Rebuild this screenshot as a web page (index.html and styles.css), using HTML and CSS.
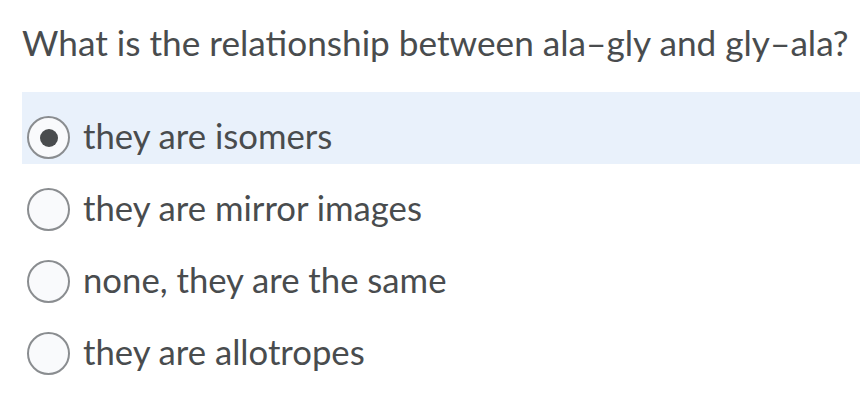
FILE: index.html
```html
<!DOCTYPE html>
<html lang="en">
<head>
  <meta charset="UTF-8">
  <title>Quiz question</title>
  <link rel="stylesheet" href="styles.css">
</head>
<body>
  <div class="question">
    <h2 class="question-text">What is the relationship between ala&#8211;gly and gly&#8211;ala?</h2>
    <div class="answers">
      <label class="answer selected">
        <span class="radio checked"></span>
        <span class="answer-text">they are isomers</span>
      </label>
      <label class="answer">
        <span class="radio"></span>
        <span class="answer-text">they are mirror images</span>
      </label>
      <label class="answer">
        <span class="radio"></span>
        <span class="answer-text">none, they are the same</span>
      </label>
      <label class="answer">
        <span class="radio"></span>
        <span class="answer-text">they are allotropes</span>
      </label>
    </div>
  </div>
</body>
</html>
```

FILE: styles.css
```css
* {
  box-sizing: border-box;
}
body {
  margin: 0;
  background: #ffffff;
  color: #494c4e;
  font-family: Lato, "Open Sans", sans-serif;
}
.question {
  padding: 20px 0 0 22px;
}
.question-text {
  font-size: 35.2px;
  font-weight: normal;
  line-height: 44px;
  margin: 0 0 28px;
}
.answers {
  display: flex;
  flex-direction: column;
}
.answer {
  display: flex;
  align-items: center;
  gap: 13px;
  height: 72px;
  padding: 24px 0 5px 5px;
}
.answer.selected {
  background: #e9f1fb;
}
.radio {
  width: 43px;
  height: 43px;
  border: 2px solid #8a8d90;
  border-radius: 50%;
  background: #f9fafc;
  display: flex;
  align-items: center;
  justify-content: center;
  flex-shrink: 0;
}
.radio.checked::after {
  content: "";
  width: 18px;
  height: 18px;
  border-radius: 50%;
  background: #494c4e;
}
.answer-text {
  font-size: 34.7px;
  line-height: 40px;
  padding-bottom: 4px;
}
```
